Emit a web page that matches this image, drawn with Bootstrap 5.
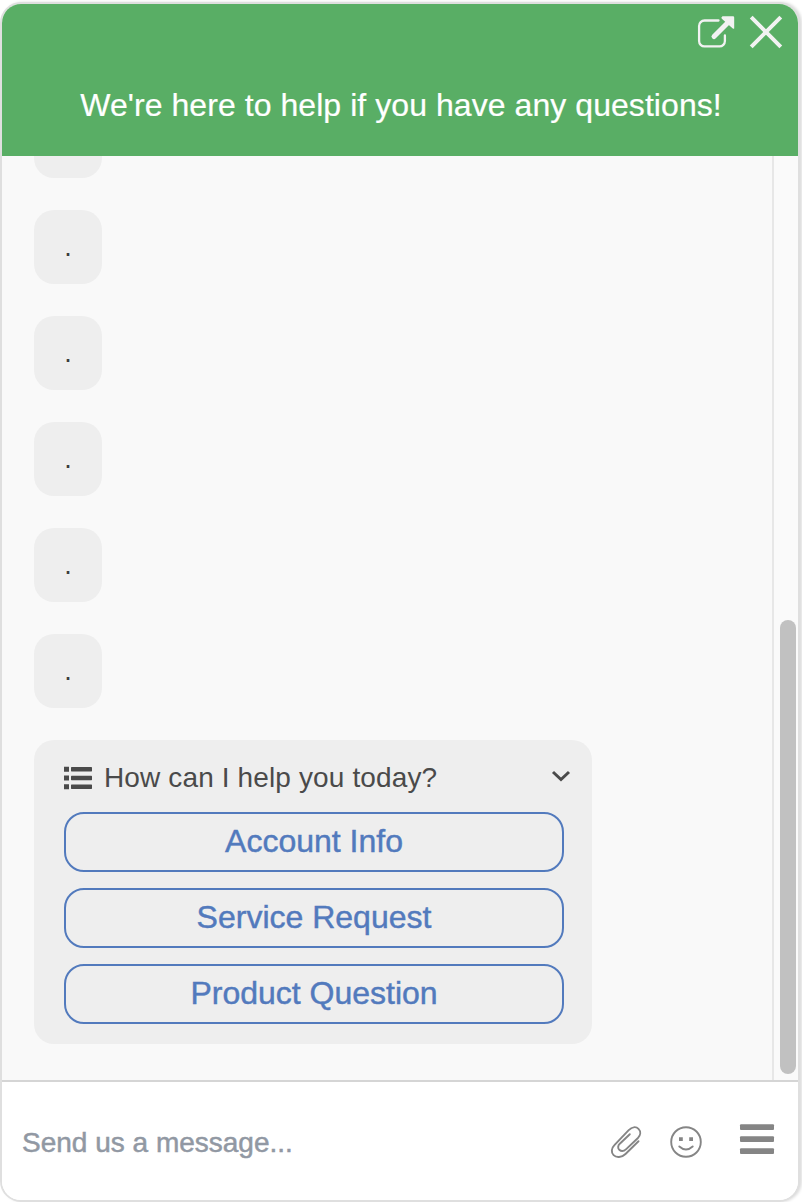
<!DOCTYPE html>
<html lang="en">
<head>
<meta charset="utf-8">
<meta name="viewport" content="width=device-width, initial-scale=1">
<title>Chat</title>
<link href="https://cdn.jsdelivr.net/npm/bootstrap@5.3.0/dist/css/bootstrap.min.css" rel="stylesheet">
<style>
body{font-family:"Liberation Sans",Arial,sans-serif;background:#fff;width:802px;height:1202px;padding-top:2px;overflow:hidden}
.chat{width:800px;height:1200px;border:2px solid #dfdfdf;border-radius:21px;box-shadow:2px 0 3px #ddd;overflow:hidden;background:#fff}
.chat-head{height:152px;background:#59ae65;color:#fff;padding:10px 16px 0 0}
.chat-title{font-size:32px;line-height:38px;margin:34px 0 0 18px;letter-spacing:.06px;white-space:nowrap;-webkit-text-stroke:.2px #fff}
.chat-log{height:924px;background:#f9f9f9}
.messages{width:770px;padding:0 0 36px 32px;gap:32px}
.track{width:26px;border-left:2px solid #e7e7e7;background:#fafafa;padding:464px 2px 6px 6px}
.thumb{width:16px;height:454px;border-radius:8px;background:#c1c1c1}
.bubble{background:#eee;border-radius:20px;width:68px;height:74px;color:#3c3c3c;font-size:27px;line-height:74px}
.menu-bubble{background:#eee;border-radius:20px;width:558px;height:304px;padding:20px 28px 20px 30px}
.menu-title{font-size:28px;line-height:36px;color:#4a4a4a;letter-spacing:.13px}
.choice{height:60px;border:2px solid #527abd;border-radius:20px;color:#527abd;font-size:32px;line-height:54px;padding:0 0 2px;-webkit-text-stroke:.45px #527abd}
.compose{height:120px;border-top:2px solid #d5d5d5;background:#fff;padding:0 24px 0 20px}
.compose-input{font-size:28px;line-height:36px;color:#9198a3;-webkit-text-stroke:.5px #9198a3;padding-top:3px}
.tool-gap{margin-left:26px}
.menu-gap{margin-left:36px}
svg{display:block;flex:none;overflow:visible}
</style>
</head>
<body>
<main class="chat d-flex flex-column">
  <header class="chat-head flex-shrink-0">
    <div class="d-flex justify-content-end gap-3">
      <svg width="38" height="38" viewBox="0 0 38 38" fill="none" stroke="#f2f2f2" stroke-width="2.3" stroke-linecap="round">
        <path d="M22.500 6.500H8.500a5.400 5.400 0 0 0-5.400 5.400V27a5.400 5.400 0 0 0 5.400 5.400H23.500a5.400 5.400 0 0 0 5.400-5.400V21.500"/>
        <path d="M18 22.500 32 8.500" stroke-width="5"/>
        <path d="M26.500 2.200h10.500q1.200 0 1.200 1.200v11q-1 .6-2-.4L25.800 4.800q-1.200-1.500.7-2.600z" fill="#f2f2f2" stroke="none"/>
      </svg>
      <svg width="32" height="38" viewBox="0 0 32 38" fill="none" stroke="#f2f2f2" stroke-width="4"><path d="M1.200 3.200 30.800 32.800M30.800 3.200 1.200 32.800"/></svg>
    </div>
    <h1 class="chat-title text-center fw-normal">We're here to help if you have any questions!</h1>
  </header>
  <section class="chat-log d-flex flex-shrink-0 overflow-hidden">
    <div class="messages d-flex flex-column justify-content-end">
      <div class="bubble flex-shrink-0"></div>
      <div class="bubble text-center flex-shrink-0">.</div>
      <div class="bubble text-center flex-shrink-0">.</div>
      <div class="bubble text-center flex-shrink-0">.</div>
      <div class="bubble text-center flex-shrink-0">.</div>
      <div class="bubble text-center flex-shrink-0">.</div>
      <div class="menu-bubble flex-shrink-0">
        <div class="d-flex align-items-start justify-content-between mb-3">
          <div class="d-flex align-items-center">
            <svg class="me-2" width="32" height="24" viewBox="0 0 32 24" fill="#4a4a4a"><path d="M0 .8h5v5H0zM0 9.500h5v5H0zM0 18.200h5v5H0z"/><rect x="7" y="1" width="21" height="4.400" rx=".6"/><rect x="7" y="9.800" width="21" height="4.400" rx=".6"/><rect x="7" y="18.500" width="21" height="4.400" rx=".6"/></svg>
            <span class="menu-title">How can I help you today?</span>
          </div>
          <svg width="30" height="36" viewBox="0 0 30 36" fill="none" stroke="#4a4a4a" stroke-width="3"><path d="m19 12 8 7.500 8-7.500"/></svg>
        </div>
        <div class="d-grid gap-3">
          <button type="button" class="btn choice">Account Info</button>
          <button type="button" class="btn choice">Service Request</button>
          <button type="button" class="btn choice">Product Question</button>
        </div>
      </div>
    </div>
    <div class="track"><div class="thumb"></div></div>
  </section>
  <footer class="compose d-flex align-items-center flex-shrink-0">
    <span class="compose-input me-auto">Send us a message...</span>
    <svg class="mt-1" width="32" height="34" viewBox="0 0 32 34" fill="none" stroke="#858585" stroke-width="1.900" stroke-linecap="round" stroke-linejoin="round"><path d="M28.500 15.200 15.500 28C11.500 31.800 6.300 31.900 3.600 29.200C.9 26.400 1.400 22.200 4.400 19.200L18.700 4.200C22 .9 25.900.4 28.500 2.900C31.100 5.500 30.700 9.300 27.700 12.300L16.200 23.100C13.800 25.400 11 25.400 9.300 23.800C7.600 22.100 7.800 19.700 9.800 17.700L19.800 8.200"/></svg>
    <svg class="tool-gap mt-1" width="36" height="34" viewBox="0 0 36 34" fill="none" stroke="#858585" stroke-width="1.900"><circle cx="18" cy="16" r="14.800"/><path d="M11.300 20.500q6.700 6 13.400 0" stroke-width="1.900" stroke-linecap="round"/><path d="M11 11.300h3.800v3.800H11zM21.200 11.300H25v3.800h-3.800z" fill="#858585" stroke="none"/></svg>
    <svg class="menu-gap" width="34" height="34" viewBox="0 0 34 34" fill="#858585"><rect y="0.300" width="34" height="5.700" rx="1"/><rect y="12.300" width="34" height="5.700" rx="1"/><rect y="24.300" width="34" height="5.700" rx="1"/></svg>
  </footer>
</main>
<script src="https://cdn.jsdelivr.net/npm/bootstrap@5.3.0/dist/js/bootstrap.bundle.min.js"></script>
</body>
</html>
